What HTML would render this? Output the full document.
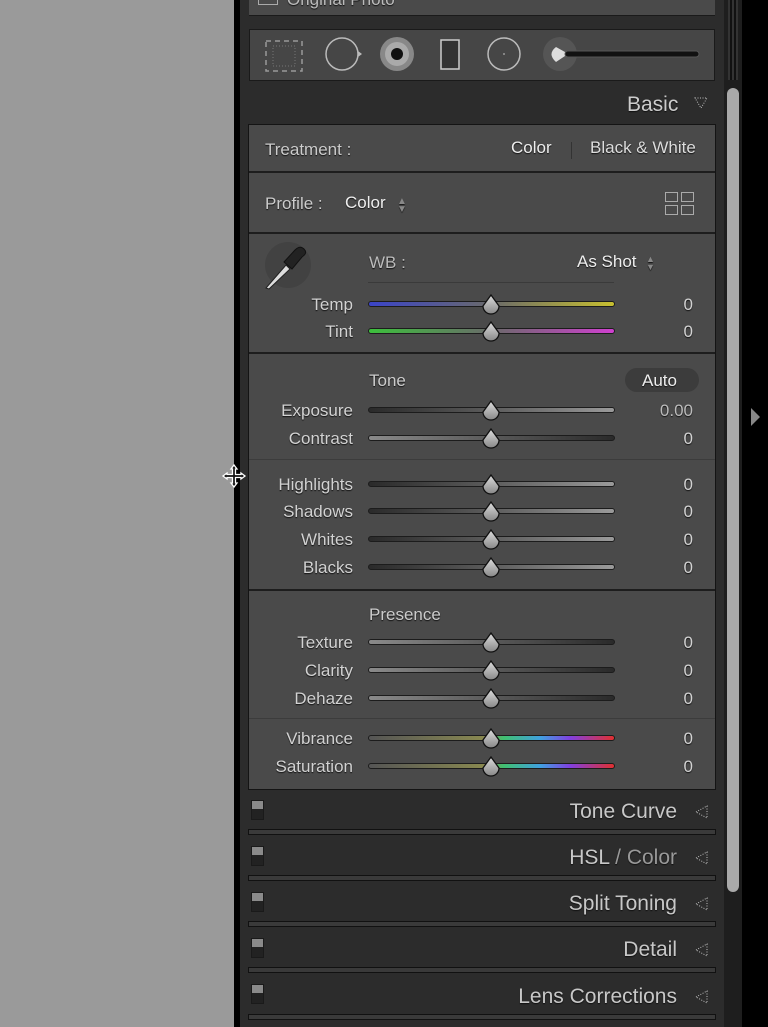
<!DOCTYPE html>
<html><head><meta charset="utf-8"><style>
*{margin:0;padding:0;box-sizing:border-box}
body{width:768px;height:1027px;overflow:hidden;background:#000;font-family:"Liberation Sans",sans-serif;position:relative}
.a{position:absolute}
.t{position:absolute;color:#d2d2d2;font-size:17px;text-shadow:0 1px 1px #111;white-space:nowrap;line-height:18px}
.lab{right:415px;text-align:right}
.val{right:75px;text-align:right}
.trk{position:absolute;left:368px;width:247px;height:6px;border-radius:3px;border:1px solid #1c1c1c}
.th{position:absolute;left:481px;width:20px;height:22px}
.sep{position:absolute;left:249px;width:466px;height:2px;background:#1d1d1d}
.bar{position:absolute;left:248px;width:468px;height:6px;background:#3a3a3a;border:1px solid #111}
.sw{position:absolute;left:251px;width:13px;height:20px;background:linear-gradient(#8a8a8a 0 45%,#222 45%);border:1px solid #1a1a1a}
.h{font-size:21px;line-height:22px;color:#c8c8c8}
</style></head><body>
<div class="a" style="left:0;top:0;width:234px;height:1027px;background:#9a9a9a"></div>
<div class="a" style="left:240px;top:0;width:8px;height:1027px;background:#2c2c2c"></div>
<div class="a" style="left:716px;top:0;width:8px;height:1027px;background:#2c2c2c"></div>
<div class="a" style="left:248px;top:0;width:468px;height:1027px;background:#2c2c2c"></div>
<div class="a" style="left:724px;top:0;width:18px;height:1027px;background:#1e1e1e"></div>
<div class="a" style="left:728px;top:0;width:10px;height:80px;background:repeating-linear-gradient(90deg,#333 0 2px,#111 2px 4px)"></div>
<div class="a" style="left:727px;top:88px;width:12px;height:804px;border-radius:6px;background:#a9a9a9"></div>
<div class="a" style="left:751px;top:408px;width:0;height:0;border-left:9px solid #888;border-top:9px solid transparent;border-bottom:9px solid transparent"></div>
<svg class="a" style="left:221px;top:463px" width="26" height="26" viewBox="0 0 26 26"><path d="M13 2 L16 6 H14.5 V11.5 H20 V10 L24 13 L20 16 V14.5 H14.5 V20 H16 L13 24 L10 20 H11.5 V14.5 H6 V16 L2 13 L6 10 V11.5 H11.5 V6 H10 Z" fill="#111" stroke="#fff" stroke-width="1.3"/></svg>
<div class="a" style="left:249px;top:0;width:466px;height:16px;background:#4a4a4a;border-bottom:1px solid #1a1a1a"></div>
<div class="a" style="left:258px;top:-6px;width:20px;height:11px;border:1.5px solid #aaa"></div>
<div class="t" style="left:287px;top:-9px;color:#bbb">Original Photo</div>
<div class="a" style="left:249px;top:29px;width:466px;height:52px;background:#464646;border:1px solid #1a1a1a"></div>
<svg class="a" style="left:249px;top:29px" width="466" height="52">
<rect x="17" y="12" width="36" height="30" fill="none" stroke="#999" stroke-width="1.5" stroke-dasharray="5 4"/>
<rect x="24" y="17" width="22" height="20" fill="none" stroke="#777" stroke-dasharray="1 2"/>
<circle cx="93" cy="25" r="16" fill="none" stroke="#bbb" stroke-width="1.5"/><path d="M109 22 L113 25 L109 28Z" fill="#bbb"/>
<circle cx="148" cy="25" r="17" fill="#888"/><circle cx="148" cy="25" r="12" fill="#aaa"/><circle cx="148" cy="25" r="6" fill="#111"/>
<rect x="192" y="11" width="18" height="29" fill="#333" stroke="#ccc" stroke-width="1.5"/>
<circle cx="255" cy="25" r="16" fill="none" stroke="#bbb" stroke-width="1.5"/><circle cx="255" cy="25" r="1" fill="#999"/>
<circle cx="311" cy="25" r="17" fill="#555"/>
<path d="M307 18 Q298 25 307 33 L316 27 L316 23Z" fill="#ddd"/>
<rect x="316" y="22" width="134" height="6" rx="3" fill="#111" stroke="#555"/>
</svg>
<div class="t h" style="left:627px;top:94px;color:#ccc">Basic</div>
<svg class="a" style="left:694px;top:97px" width="14" height="12"><path d="M1 1H13L7 11Z" fill="none" stroke="#bbb" stroke-dasharray="1 1.5"/></svg>
<div class="a" style="left:248px;top:124px;width:468px;height:666px;background:#4a4a4a;border:1px solid #141414"></div>
<div class="sep" style="top:171px"></div>
<div class="sep" style="top:232px"></div>
<div class="sep" style="top:352px"></div>
<div class="sep" style="top:589px"></div>
<div class="a" style="left:249px;top:459px;width:466px;height:1px;background:#3c3c3c"></div>
<div class="a" style="left:249px;top:718px;width:466px;height:1px;background:#3c3c3c"></div>
<div class="t" style="left:265px;top:141px;color:#ccc">Treatment :</div>
<div class="t" style="left:511px;top:139px;color:#eee">Color</div>
<div class="a" style="left:571px;top:142px;width:1px;height:17px;background:#333"></div>
<div class="t" style="left:590px;top:139px;color:#ddd">Black &amp; White</div>
<div class="t" style="left:265px;top:195px;color:#ccc">Profile :</div>
<div class="t" style="left:345px;top:194px;color:#eee">Color</div>
<div class="t" style="left:397px;top:193px;font-size:10px;color:#888">&#9650;</div><div class="t" style="left:397px;top:201px;font-size:10px;color:#888">&#9660;</div>
<div class="a" style="left:665px;top:192px;width:13px;height:10px;border:1.5px solid #aaa"></div>
<div class="a" style="left:681px;top:192px;width:13px;height:10px;border:1.5px solid #aaa"></div>
<div class="a" style="left:665px;top:205px;width:13px;height:10px;border:1.5px solid #aaa"></div>
<div class="a" style="left:681px;top:205px;width:13px;height:10px;border:1.5px solid #aaa"></div>
<div class="a" style="left:265px;top:242px;width:46px;height:46px;border-radius:50%;background:#424242"></div>
<svg class="a" style="left:262px;top:240px" width="52" height="52"><path d="M4 48 L24 25 L28 29 L7 49Z" fill="#ddd" stroke="#222"/><path d="M22 22 L33 10 Q38 5 42 9 Q46 13 40 17 L30 29Z" fill="#222" stroke="#111"/></svg>
<div class="t" style="left:369px;top:254px;color:#bbb">WB :</div>
<div class="t" style="left:577px;top:253px;color:#eee">As Shot</div>
<div class="t" style="left:646px;top:250px;font-size:9px;color:#888">&#9650;</div><div class="t" style="left:646px;top:258px;font-size:9px;color:#888">&#9660;</div>
<div class="a" style="left:368px;top:282px;width:246px;height:1px;background:#3a3a3a"></div>
<div class="t" style="left:369px;top:372px;color:#ccc">Tone</div>
<div class="a" style="left:625px;top:368px;width:74px;height:24px;border-radius:12px;background:#3c3c3c"></div>
<div class="t" style="left:642px;top:372px;color:#eee">Auto</div>
<div class="t" style="left:369px;top:606px;color:#ccc">Presence</div>

<div class="t lab" style="top:296px">Temp</div><div class="trk" style="top:301px;background:linear-gradient(90deg,#3a44c8,#6a6a6a 50%,#c8c030)"></div><div class="t val" style="top:296px">0</div>
<div class="t lab" style="top:323px">Tint</div><div class="trk" style="top:328px;background:linear-gradient(90deg,#3cc03c,#6a6a6a 50%,#d040d0)"></div><div class="t val" style="top:323px">0</div>
<div class="t lab" style="top:402px">Exposure</div><div class="trk" style="top:407px;background:linear-gradient(90deg,#2a2a2a,#5c5c5c 50%,#9a9a9a)"></div><div class="t val" style="top:402px;color:#bbb">0.00</div>
<div class="t lab" style="top:430px">Contrast</div><div class="trk" style="top:435px;background:linear-gradient(90deg,#8a8a8a,#5a5a5a 50%,#2a2a2a)"></div><div class="t val" style="top:430px">0</div>
<div class="t lab" style="top:476px">Highlights</div><div class="trk" style="top:481px;background:linear-gradient(90deg,#2a2a2a,#5c5c5c 50%,#9a9a9a)"></div><div class="t val" style="top:476px">0</div>
<div class="t lab" style="top:503px">Shadows</div><div class="trk" style="top:508px;background:linear-gradient(90deg,#2a2a2a,#5c5c5c 50%,#9a9a9a)"></div><div class="t val" style="top:503px">0</div>
<div class="t lab" style="top:531px">Whites</div><div class="trk" style="top:536px;background:linear-gradient(90deg,#2a2a2a,#5c5c5c 50%,#9a9a9a)"></div><div class="t val" style="top:531px">0</div>
<div class="t lab" style="top:559px">Blacks</div><div class="trk" style="top:564px;background:linear-gradient(90deg,#2a2a2a,#5c5c5c 50%,#9a9a9a)"></div><div class="t val" style="top:559px">0</div>
<div class="t lab" style="top:634px">Texture</div><div class="trk" style="top:639px;background:linear-gradient(90deg,#8a8a8a,#5a5a5a 50%,#2a2a2a)"></div><div class="t val" style="top:634px">0</div>
<div class="t lab" style="top:662px">Clarity</div><div class="trk" style="top:667px;background:linear-gradient(90deg,#8a8a8a,#5a5a5a 50%,#2a2a2a)"></div><div class="t val" style="top:662px">0</div>
<div class="t lab" style="top:690px">Dehaze</div><div class="trk" style="top:695px;background:linear-gradient(90deg,#8a8a8a,#5a5a5a 50%,#2a2a2a)"></div><div class="t val" style="top:690px">0</div>
<div class="t lab" style="top:730px">Vibrance</div><div class="trk" style="top:735px;background:linear-gradient(90deg,#555,#8a8a50 48%,#40c070 55%,#40a0e0 70%,#8040e0 82%,#e03030)"></div><div class="t val" style="top:730px">0</div>
<div class="t lab" style="top:758px">Saturation</div><div class="trk" style="top:763px;background:linear-gradient(90deg,#555,#8a8a50 48%,#40c070 55%,#40a0e0 70%,#8040e0 82%,#e03030)"></div><div class="t val" style="top:758px">0</div>

<svg width="0" height="0" style="position:absolute"><defs><linearGradient id="g" x1="0" y1="0" x2="0" y2="1"><stop offset="0" stop-color="#ddd"/><stop offset="1" stop-color="#888"/></linearGradient></defs></svg>
<svg class="th" style="top:294px" viewBox="0 0 20 22"><path d="M10 1 L18 12 A8 8 0 1 1 2 12Z" fill="url(#g)" stroke="#111" stroke-width="1.3"/></svg>
<svg class="th" style="top:321px" viewBox="0 0 20 22"><path d="M10 1 L18 12 A8 8 0 1 1 2 12Z" fill="url(#g)" stroke="#111" stroke-width="1.3"/></svg>
<svg class="th" style="top:400px" viewBox="0 0 20 22"><path d="M10 1 L18 12 A8 8 0 1 1 2 12Z" fill="url(#g)" stroke="#111" stroke-width="1.3"/></svg>
<svg class="th" style="top:428px" viewBox="0 0 20 22"><path d="M10 1 L18 12 A8 8 0 1 1 2 12Z" fill="url(#g)" stroke="#111" stroke-width="1.3"/></svg>
<svg class="th" style="top:474px" viewBox="0 0 20 22"><path d="M10 1 L18 12 A8 8 0 1 1 2 12Z" fill="url(#g)" stroke="#111" stroke-width="1.3"/></svg>
<svg class="th" style="top:501px" viewBox="0 0 20 22"><path d="M10 1 L18 12 A8 8 0 1 1 2 12Z" fill="url(#g)" stroke="#111" stroke-width="1.3"/></svg>
<svg class="th" style="top:529px" viewBox="0 0 20 22"><path d="M10 1 L18 12 A8 8 0 1 1 2 12Z" fill="url(#g)" stroke="#111" stroke-width="1.3"/></svg>
<svg class="th" style="top:557px" viewBox="0 0 20 22"><path d="M10 1 L18 12 A8 8 0 1 1 2 12Z" fill="url(#g)" stroke="#111" stroke-width="1.3"/></svg>
<svg class="th" style="top:632px" viewBox="0 0 20 22"><path d="M10 1 L18 12 A8 8 0 1 1 2 12Z" fill="url(#g)" stroke="#111" stroke-width="1.3"/></svg>
<svg class="th" style="top:660px" viewBox="0 0 20 22"><path d="M10 1 L18 12 A8 8 0 1 1 2 12Z" fill="url(#g)" stroke="#111" stroke-width="1.3"/></svg>
<svg class="th" style="top:688px" viewBox="0 0 20 22"><path d="M10 1 L18 12 A8 8 0 1 1 2 12Z" fill="url(#g)" stroke="#111" stroke-width="1.3"/></svg>
<svg class="th" style="top:728px" viewBox="0 0 20 22"><path d="M10 1 L18 12 A8 8 0 1 1 2 12Z" fill="url(#g)" stroke="#111" stroke-width="1.3"/></svg>
<svg class="th" style="top:756px" viewBox="0 0 20 22"><path d="M10 1 L18 12 A8 8 0 1 1 2 12Z" fill="url(#g)" stroke="#111" stroke-width="1.3"/></svg>

<div class="bar" style="top:829px"></div>
<div class="bar" style="top:875px"></div>
<div class="bar" style="top:921px"></div>
<div class="bar" style="top:967px"></div>
<div class="bar" style="top:1014px"></div>
<div class="sw" style="top:800px"></div><div class="t h" style="right:91px;top:801px">Tone Curve</div>
<div class="sw" style="top:846px"></div><div class="t h" style="right:91px;top:847px">HSL<span style="color:#999"> / Color</span></div>
<div class="sw" style="top:892px"></div><div class="t h" style="right:91px;top:893px">Split Toning</div>
<div class="sw" style="top:938px"></div><div class="t h" style="right:91px;top:939px">Detail</div>
<div class="sw" style="top:984px"></div><div class="t h" style="right:91px;top:986px">Lens Corrections</div>
<svg class="a" style="left:695px;top:805px" width="14" height="200"><g fill="none" stroke="#bbb" stroke-dasharray="1 1.5"><path d="M1 7 L12 1 V13Z"/><path transform="translate(0,46)" d="M1 7 L12 1 V13Z"/><path transform="translate(0,92)" d="M1 7 L12 1 V13Z"/><path transform="translate(0,138)" d="M1 7 L12 1 V13Z"/><path transform="translate(0,185)" d="M1 7 L12 1 V13Z"/></g></svg>
</body></html>
